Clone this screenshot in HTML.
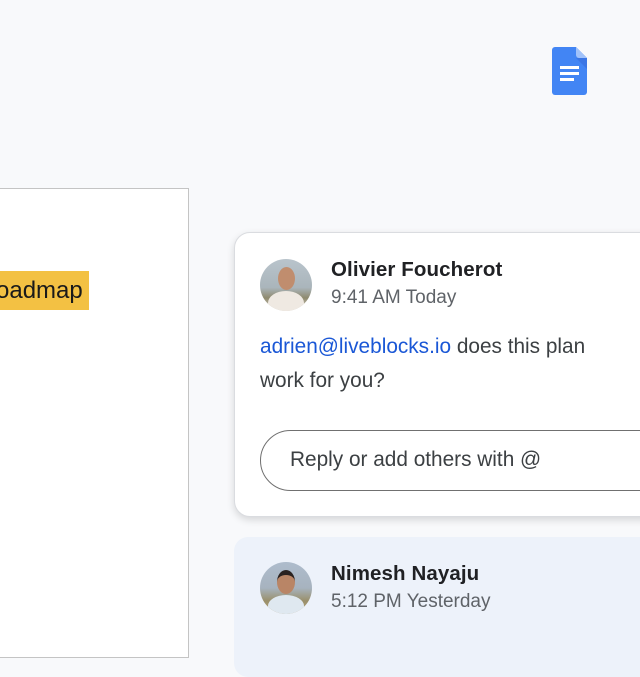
<!DOCTYPE html>
<html><head><style>
*{margin:0;padding:0;box-sizing:border-box}
body{width:640px;height:640px;overflow:hidden;background:#f8f9fb;position:relative;font-family:"Liberation Sans",Arial,sans-serif}
.doc{position:absolute;left:-2px;top:188px;width:191px;height:470px;background:#fff;border:1px solid #c4c4c4}
.hl{position:absolute;left:0;top:271px;width:89px;height:39px;background:#f3c143;font-size:24px;color:#1a1a1a;line-height:39px;white-space:nowrap;overflow:hidden;text-indent:-12px}
.card{position:absolute;left:234px;top:232px;width:440px;height:285px;background:#fff;border-radius:16px;border:1px solid #dadce0;box-shadow:0 3px 8px rgba(0,0,0,.14)}
.card2{position:absolute;left:234px;top:537px;width:440px;height:140px;background:#edf2fa;border-radius:14px}
.av{position:absolute;width:52px;height:52px;border-radius:50%;overflow:hidden}
.name{position:absolute;left:331px;font-size:20.5px;color:#202124;font-weight:bold;letter-spacing:0.1px}
.time{position:absolute;left:331px;font-size:19px;color:#5f6368}
.body{position:absolute;left:260px;top:330px;font-size:20.8px;color:#3c4043;line-height:34px}
.body a{color:#1a57d6;text-decoration:none}
.reply{position:absolute;left:260px;top:430px;width:420px;height:61px;border:1.5px solid #707070;border-radius:31px;font-size:20.8px;color:#3c4043;line-height:58px;padding-left:29px}
</style></head><body>
<svg style="position:absolute;left:552px;top:47px" width="35" height="48" viewBox="0 0 35 48">
<path d="M3 0H24L35 11V45a3 3 0 0 1-3 3H3a3 3 0 0 1-3-3V3a3 3 0 0 1 3-3z" fill="#4285f4"/>
<path d="M24 0L35 11H27a3 3 0 0 1-3-3z" fill="#a1c2fa"/>
<path d="M24 11L35 22V11z" fill="#3367d6" opacity=".5"/>
<rect x="8" y="19" width="19" height="3" fill="#fff"/>
<rect x="8" y="25" width="19" height="3" fill="#fff"/>
<rect x="8" y="31" width="14" height="3" fill="#fff"/>
</svg>
<div class="doc"></div>
<div class="hl">roadmap</div>
<div class="card"></div>
<div class="card2"></div>
<div class="av" style="left:260px;top:259px;background:linear-gradient(#b9c4cc 0%,#aab5bb 55%,#8f8a6e 75%,#d8d3cc 100%)">
<div style="position:absolute;left:18px;top:8px;width:17px;height:23px;border-radius:50%;background:#c08d6e"></div>
<div style="position:absolute;left:8px;top:32px;width:36px;height:24px;border-radius:50% 50% 0 0;background:#efe9e2"></div></div>
<div class="name" style="top:258px">Olivier Foucherot</div>
<div class="time" style="top:287px">9:41 AM Today</div>
<div class="body"><a>adrien@liveblocks.io</a> does this plan<br>work for you?</div>
<div class="reply">Reply or add others with @</div>
<div class="av" style="left:260px;top:562px;background:linear-gradient(#aebccc 0%,#a7b3bf 50%,#9a8f6a 75%,#b8a880 100%)">
<div style="position:absolute;left:17px;top:8px;width:18px;height:24px;border-radius:50%;background:#b98566;border-top:5px solid #2a2220"></div>
<div style="position:absolute;left:8px;top:33px;width:36px;height:22px;border-radius:50% 50% 0 0;background:#dfe8f0"></div></div>
<div class="name" style="top:562px">Nimesh Nayaju</div>
<div class="time" style="top:591px">5:12 PM Yesterday</div>
</body></html>
